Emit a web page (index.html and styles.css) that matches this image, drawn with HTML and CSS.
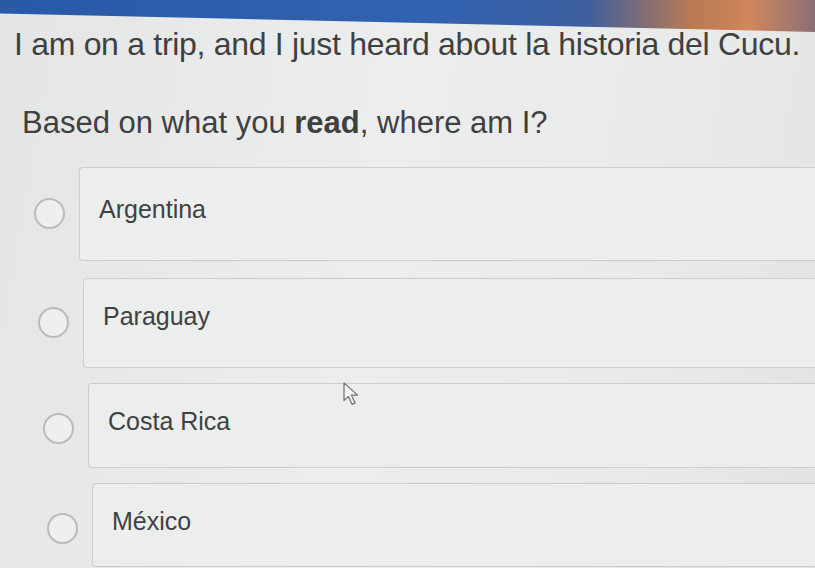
FILE: index.html
```html
<!DOCTYPE html>
<html lang="en">
<head>
    <meta charset="UTF-8">
    <meta name="viewport" content="width=device-width, initial-scale=1.0">
    <title>Question</title>
    <link rel="stylesheet" href="styles.css">
</head>
<body>
    <div class="topbar"></div>
    <div class="question">
        <p class="prompt">I am on a trip, and I just heard about la historia del Cucu.</p>
        <p class="ask">Based on what you <b>read</b>, where am I?</p>
        <div class="options">
            <label class="option opt-1">
                <span class="radio"></span>
                <span class="box">Argentina</span>
            </label>
            <label class="option opt-2">
                <span class="radio"></span>
                <span class="box">Paraguay</span>
            </label>
            <label class="option opt-3">
                <span class="radio"></span>
                <span class="box">Costa Rica</span>
            </label>
            <label class="option opt-4">
                <span class="radio"></span>
                <span class="box">México</span>
            </label>
        </div>
    </div>
    <svg class="cursor" width="20" height="27" viewBox="0 0 16 22">
        <path d="M1.5 1.5 L1.5 16 L5 12.5 L8 19 L10.5 18 L7.5 11.5 L12.5 11.5 Z" fill="#f2f3f3" stroke="#707272" stroke-width="1" stroke-linejoin="round"/>
    </svg>
</body>
</html>
```

FILE: styles.css
```css
* {
    margin: 0;
    padding: 0;
    box-sizing: border-box;
}
body {
    width: 815px;
    height: 568px;
    overflow: hidden;
    position: relative;
    font-family: "Liberation Sans", Arial, sans-serif;
    color: #3f4041;
    background: linear-gradient(100deg, #e4e6e6 0%, #eceeed 45%, #e9ebea 75%, #e3e2e2 100%);
}
.topbar {
    height: 32px;
    background: linear-gradient(90deg, #2a5aa6 0%, #3262b0 55%, #3d5f9e 72%, #b97a52 85%, #d0875a 92%, #8a6f78 100%);
    clip-path: polygon(0 0, 100% 0, 100% 100%, 0 42%);
    margin-bottom: -8px;
}
.prompt {
    font-size: 32px;
    line-height: 40px;
    letter-spacing: -0.3px;
    padding-left: 14px;
}
.ask {
    font-size: 31px;
    line-height: 36px;
    margin-top: 41px;
    padding-left: 22px;
}
.ask b {
    font-weight: bold;
}
.options {
    margin-top: 26px;
    display: flex;
    flex-direction: column;
}
.option {
    display: flex;
    align-items: flex-start;
    gap: 14px;
}
.radio {
    flex: none;
    width: 31px;
    height: 31px;
    border: 2px solid #b9bcbc;
    border-radius: 50%;
    background: #eef0ef;
}
.box {
    flex: 1;
    border: 1.5px solid #cbcece;
    border-right: none;
    border-radius: 4px 0 0 4px;
    background: #eceeed;
    font-size: 25px;
    padding: 23px 0 0 19px;
    color: #404142;
}
.opt-1 { margin-left: 34px; }
.opt-1 .box { height: 94px; padding-top: 27px; }
.opt-1 .radio { margin-top: 31px; }
.opt-2 { margin-left: 38px; margin-top: 17px; }
.opt-2 .box { height: 90px; }
.opt-2 .radio { margin-top: 29px; }
.opt-3 { margin-left: 43px; margin-top: 15px; }
.opt-3 .box { height: 85px; }
.opt-3 .radio { margin-top: 30px; }
.opt-4 { margin-left: 47px; margin-top: 15px; }
.opt-4 .box { height: 84px; }
.opt-4 .radio { margin-top: 30px; }
.cursor {
    position: absolute;
    left: 342px;
    top: 381px;
}
```
